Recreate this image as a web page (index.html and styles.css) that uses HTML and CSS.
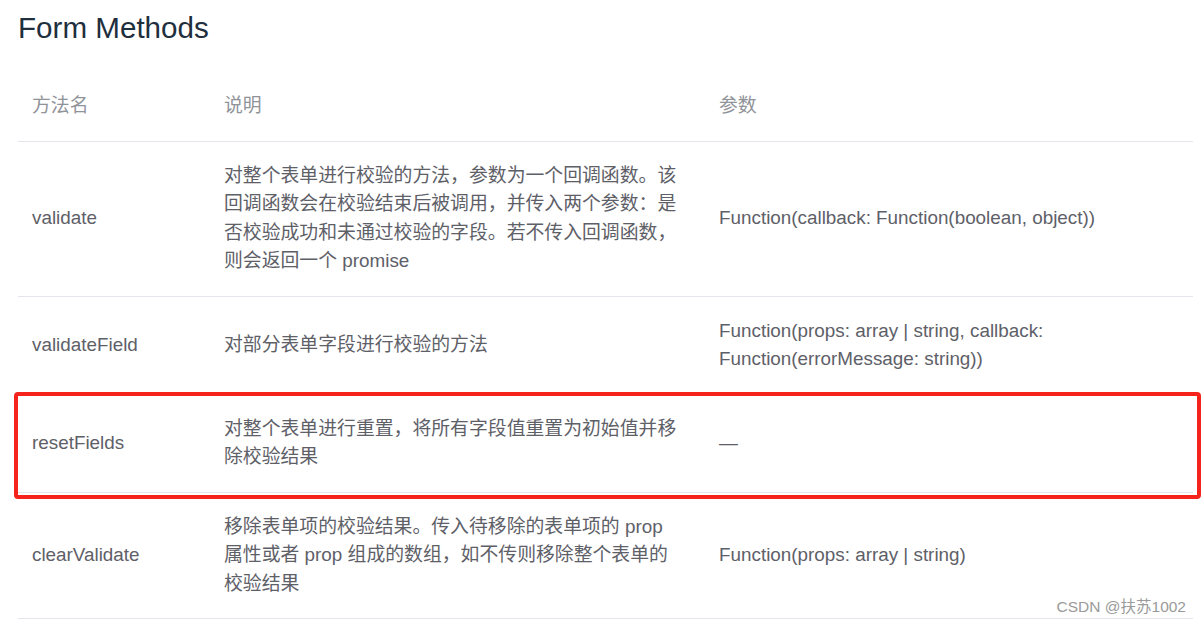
FILE: index.html
```html
<!DOCTYPE html>
<html lang="zh-CN">
<head>
<meta charset="utf-8">
<title>Form Methods</title>
<link rel="stylesheet" href="styles.css">
</head>
<body>
<div class="page">
  <h3 class="title">Form Methods</h3>
  <table class="methods">
    <colgroup>
      <col class="c-name">
      <col class="c-desc">
      <col class="c-param">
    </colgroup>
    <thead>
      <tr><th>方法名</th><th class="desc">说明</th><th>参数</th></tr>
    </thead>
    <tbody>
      <tr>
        <td>validate</td>
        <td class="desc">对整个表单进行校验的方法，参数为一个回调函数。该<br>回调函数会在校验结束后被调用，并传入两个参数：是<br>否校验成功和未通过校验的字段。若不传入回调函数，<br>则会返回一个 promise</td>
        <td>Function(callback: Function(boolean, object))</td>
      </tr>
      <tr>
        <td>validateField</td>
        <td class="desc">对部分表单字段进行校验的方法</td>
        <td>Function(props: array | string, callback:<br>Function(errorMessage: string))</td>
      </tr>
      <tr>
        <td>resetFields</td>
        <td class="desc">对整个表单进行重置，将所有字段值重置为初始值并移<br>除校验结果</td>
        <td>—</td>
      </tr>
      <tr>
        <td>clearValidate</td>
        <td class="desc">移除表单项的校验结果。传入待移除的表单项的 prop<br>属性或者 prop 组成的数组，如不传则移除整个表单的<br>校验结果</td>
        <td>Function(props: array | string)</td>
      </tr>
    </tbody>
  </table>
  <div class="highlight"></div>
  <div class="watermark">CSDN @扶苏1002</div>
</div>
</body>
</html>
```

FILE: styles.css
```css
html, body {
  margin: 0;
  padding: 0;
  background: #ffffff;
}

.page {
  position: relative;
  width: 1204px;
  height: 624px;
  overflow: hidden;
  padding: 0 11px 0 18px;
  box-sizing: border-box;
  font-family: "Liberation Sans", "Noto Sans CJK SC", sans-serif;
}

.title {
  margin: 8px 0 24px 0;
  font-size: 29.6px;
  line-height: 40px;
  font-weight: 400;
  color: #1f2f3d;
}

.methods {
  width: 1175px;
  border-collapse: collapse;
  table-layout: fixed;
  font-size: 18.85px;
  line-height: 28.5px;
}

.c-name { width: 192px; }
.c-desc { width: 495px; }
.c-param { width: 488px; }

.methods th,
.methods td {
  padding: 20px 14px;
  text-align: left;
  vertical-align: middle;
  border-bottom: 1px solid #e3e6ec;
}

.methods .desc {
  white-space: nowrap;
}

.methods th {
  font-weight: 400;
  color: #909399;
}

.methods td {
  color: #5e6068;
}

.highlight {
  position: absolute;
  left: 14px;
  top: 392px;
  width: 1187px;
  height: 107px;
  box-sizing: border-box;
  border: 4px solid #f5231b;
  border-radius: 4px;
}

.watermark {
  position: absolute;
  right: 18px;
  top: 597px;
  font-size: 15.5px;
  line-height: 20px;
  color: #9a9a9a;
}
```
